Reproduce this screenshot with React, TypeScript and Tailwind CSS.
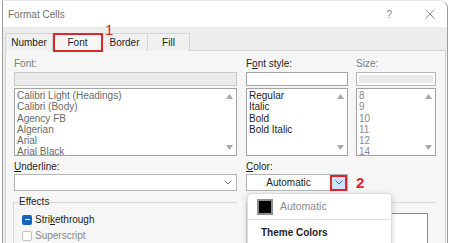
import React from 'react';

const Up = () => (
  <svg width="7" height="5" viewBox="0 0 7 5" className="block">
    <path d="M0 5 L3.5 0 L7 5 Z" fill="#a9a9a9" />
  </svg>
);

const Down = () => (
  <svg width="7" height="5" viewBox="0 0 7 5" className="block">
    <path d="M0 0 L3.5 5 L7 0 Z" fill="#a9a9a9" />
  </svg>
);

const Chevron = ({ color = '#7a7a7a' }: { color?: string }) => (
  <svg width="8" height="5" viewBox="0 0 8 5" className="block">
    <path d="M0.5 0.5 L4 4 L7.5 0.5" fill="none" stroke={color} strokeWidth="1" />
  </svg>
);

// list box with the little scroll arrows on the right
function ListBox({ items, itemClass }: { items: string[]; itemClass: string }) {
  return (
    <div className="flex h-[68px] border border-[#a3a3a3] bg-white">
      <div className={`flex-1 pl-[2px] pt-[1px] leading-[11.3px] ${itemClass}`}>
        {items.map((it) => (
          <div key={it}>{it}</div>
        ))}
      </div>
      <div className="w-[13px] flex flex-col items-center justify-between py-[5px]">
        <Up />
        <Down />
      </div>
    </div>
  );
}

export default function App() {
  return (
    <div className="relative w-[450px] h-[243px] overflow-hidden bg-white font-['Liberation_Sans',Arial,sans-serif] text-[10px] text-[#1e1e1e]">
      <div className="ml-[2px] w-[446px] h-[280px] border-x border-t border-t-[#e6e6e6] border-x-[#9d9d9d] rounded-tr-[8px] flex flex-col">
        {/* title bar */}
        <div className="h-[26px] shrink-0 bg-white rounded-tr-[8px] flex items-center pl-[5px] pr-[12px]">
          <span className="text-[10px] text-[#707070]">Format Cells</span>
          <span className="ml-auto mr-[33px] text-[10px] text-[#8a8a8a]">?</span>
          <svg width="10" height="10" viewBox="0 0 10 10">
            <path d="M0.5 0.5 L9.5 9.5 M9.5 0.5 L0.5 9.5" stroke="#8a8a8a" strokeWidth="0.9" />
          </svg>
        </div>

        <div className="flex-1 bg-[#ededed] pl-[2px] pr-[1px] pt-[6px]">
          {/* tabs */}
          <div className="flex h-[18px] -mb-px relative z-10">
            <div className="w-[48px] border border-b-0 border-[#d4d4d4] bg-[#f0f0f0] flex items-center justify-center">Number</div>
            <div className="w-[49px] border-x border-t border-[#d4d4d4] bg-[#f6f6f6] flex items-center justify-center">Font</div>
            <div className="w-[46px] border-r border-t border-[#d4d4d4] bg-[#f0f0f0] flex items-center justify-center">Border</div>
            <div className="w-[42px] border-r border-t border-[#d4d4d4] bg-[#f0f0f0] flex items-center justify-center">Fill</div>
          </div>

          {/* panel */}
          <div className="h-[220px] border border-[#d4d4d4] bg-[#f6f6f6] pl-[8px] pt-[6px]">
            <div className="flex">
              <div className="w-[223px] mr-[9px]">
                <div className="h-[14px] leading-[14px] text-[#7a7a7a]">Font:</div>
                <div className="mt-[1px] h-[14px] border border-[#c9c9c9] bg-[#ebebeb]" />
                <div className="mt-[2px]">
                  <ListBox
                    items={['Calibri Light (Headings)', 'Calibri (Body)', 'Agency FB', 'Algerian', 'Arial', 'Arial Black']}
                    itemClass="text-[#6a6a6a]"
                  />
                </div>
              </div>
              <div className="w-[102px] mr-[8px]">
                <div className="h-[14px] leading-[14px] text-[#1e1e1e]">
                  F<span className="underline">o</span>nt style:
                </div>
                <div className="mt-[1px] h-[14px] border border-[#a3a3a3] bg-white" />
                <div className="mt-[2px]">
                  <ListBox items={['Regular', 'Italic', 'Bold', 'Bold Italic']} itemClass="text-[#1e1e1e]" />
                </div>
              </div>
              <div className="w-[80px]">
                <div className="h-[14px] leading-[14px] text-[#7a7a7a]">Size:</div>
                <div className="mt-[1px] h-[14px] border border-[#b5b5b5] bg-white p-[2px]">
                  <div className="h-full bg-[#e9e9e9]" />
                </div>
                <div className="mt-[2px]">
                  <ListBox items={['8', '9', '10', '11', '12', '14']} itemClass="text-[#8a8a8a]" />
                </div>
              </div>
            </div>

            {/* lower half */}
            <div className="flex mt-[4px]">
              <div className="w-[223px] mr-[9px]">
                <div className="h-[14px] leading-[14px]">
                  <span className="underline">U</span>nderline:
                </div>
                <div className="h-[17px] border border-[#b5b5b5] bg-white flex items-center justify-end pr-[4px]">
                  <Chevron />
                </div>
                <div className="relative mt-[11px] -ml-px h-[60px] border-t border-l border-[#d8d8d8]">
                  <span className="absolute left-[4px] -top-[7px] bg-[#f6f6f6] px-[1px] leading-[12px]">Effects</span>
                  <div className="flex items-center mt-[11px] ml-[8px] h-[11px]">
                    <div className="w-[10px] h-[10px] rounded-[2px] bg-[#1565c0] flex items-center justify-center">
                      <div className="w-[5px] h-[1.5px] bg-white" />
                    </div>
                    <span className="ml-[3px]">
                      Stri<span className="underline">k</span>ethrough
                    </span>
                  </div>
                  <div className="flex items-center mt-[5px] ml-[8px] h-[11px]">
                    <div className="w-[10px] h-[10px] rounded-[2px] border border-[#c2c2c2] bg-white" />
                    <span className="ml-[3px] text-[#8a8a8a]">Superscript</span>
                  </div>
                </div>
              </div>

              <div className="w-[190px]">
                <div className="h-[14px] leading-[14px]">
                  <span className="underline">C</span>olor:
                </div>
                <div className="w-[102px] h-[17px] border border-[#b5b5b5] bg-white flex items-center">
                  <span className="flex-1 text-center">Automatic</span>
                  <div className="w-[17px] h-[16px] border-2 border-[#e0252b] bg-[#cfe3f6] flex items-center justify-center">
                    <Chevron color="#3a6ea5" />
                  </div>
                </div>
                <div className="mt-[11px] h-[60px] border-t border-l border-[#d8d8d8] pl-[9px] pt-[10px]">
                  <div className="w-[172px] h-[40px] border border-[#8c8c8c] bg-white" />
                </div>
              </div>
            </div>
          </div>
        </div>
      </div>

      {/* annotation: red box around the Font tab and numbers */}
      <div className="absolute z-20 left-[53px] top-[33px] w-[50px] h-[19px] border-2 border-[#e0252b]" />
      <span className="absolute z-20 left-[105px] top-[21px] text-[15px] leading-[17px] text-[#e0252b]">1</span>
      <span className="absolute z-20 left-[356px] top-[174px] text-[15px] leading-[17px] font-bold text-[#e0252b]">2</span>

      {/* color popup */}
      <div className="absolute z-20 left-[247px] top-[193px] w-[145px] h-[60px] bg-white border border-[#dcdcdc] rounded-t-[4px] shadow-[0_2px_6px_rgba(0,0,0,0.18)]">
        <div className="flex items-center h-[25px] pl-[9px]">
          <div className="w-[16px] h-[16px] border-2 border-[#8e8e8e] bg-black" />
          <span className="ml-[7px] text-[10.5px] text-[#8a8a8a]">Automatic</span>
        </div>
        <div className="border-t border-[#e2e2e2]" />
        <div className="pl-[13px] pt-[5px] font-bold text-[10px]">Theme Colors</div>
      </div>
    </div>
  );
}
